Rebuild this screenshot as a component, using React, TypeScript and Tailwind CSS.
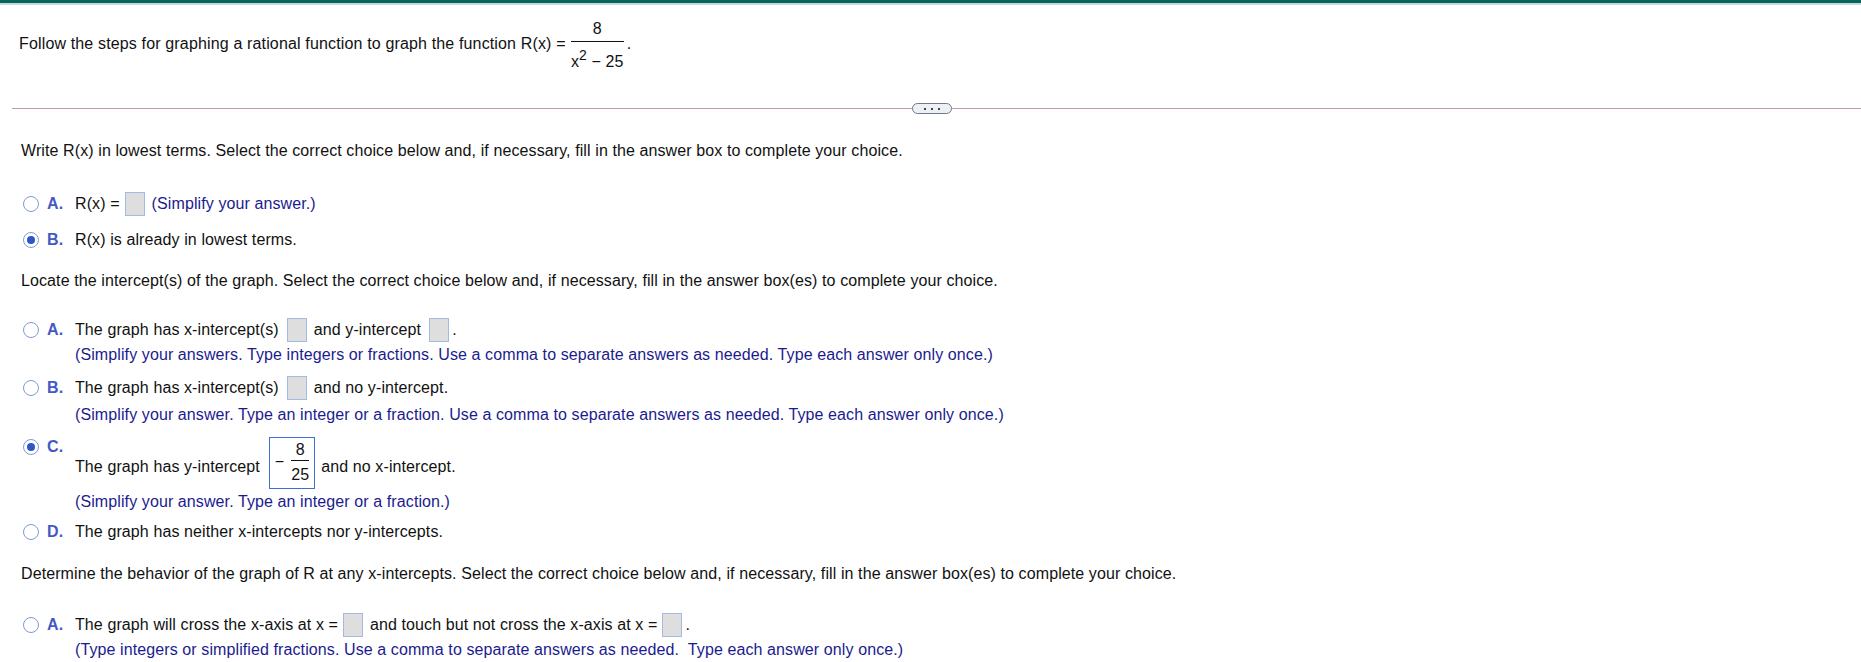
import React from "react";

function Radio({ checked }: { checked?: boolean }) {
  return (
    <span className="flex h-[16px] w-[16px] shrink-0 items-center justify-center rounded-full border-[1.5px] border-[#7f9bd1] bg-white">
      {checked && <span className="h-[8px] w-[8px] rounded-full bg-[#2f55c9]" />}
    </span>
  );
}

function Box({ tight }: { tight?: boolean }) {
  return (
    <span
      className={`${tight ? "ml-[5px]" : "ml-[8px]"} mr-[7px] inline-block h-[24px] w-[20px] shrink-0 border border-[#a3bae2] bg-[#dedede]`}
    />
  );
}

function Label({ l }: { l: string }) {
  return <span className="ml-[8px] w-[28px] shrink-0 font-bold text-[#4558c4]">{l}</span>;
}

function Hint({ children, className = "" }: { children: React.ReactNode; className?: string }) {
  return <div className={`pl-[75px] leading-[20px] text-[#1b1b8f] ${className}`}>{children}</div>;
}

export default function App() {
  return (
    <div className="flex min-h-[662px] w-full flex-col bg-white font-['Liberation_Sans',Arial,sans-serif] text-[16px] tracking-[0.1px] text-[#111]">
      <div className="h-[3px] bg-[#06665a]" />
      <div className="h-[2px] bg-[#c7d6e1]" />

      {/* Title */}
      <div className="mt-[10px] flex items-center pl-[19px]">
        <span className="leading-[20px] tracking-[0.15px]">
          Follow the steps for graphing a rational function to graph the function R(x) =
        </span>
        <span className="ml-[5px] flex flex-col items-center">
          <span className="h-[22px] pt-[3px] leading-[22px]">8</span>
          <span className="mt-[4px] h-px w-[53px] bg-[#111]" />
          <span className="pt-[10px] leading-[20px]">
            x<span className="relative -top-[7px] text-[14px]">2</span> − 25
          </span>
        </span>
        <span className="ml-[3px] leading-[20px]">.</span>
      </div>

      {/* Separator */}
      <div className="relative mt-[36px] ml-[12px] h-px bg-[#c697a8]">
        <span className="absolute left-[900px] top-[-5px] flex h-[11px] w-[40px] items-center justify-center gap-[5px] rounded-full border border-[#6e7a89] bg-[#eef1f4]">
          <span className="h-[2px] w-[2px] bg-[#444]" />
          <span className="h-[2px] w-[2px] bg-[#444]" />
          <span className="h-[2px] w-[2px] bg-[#444]" />
        </span>
      </div>

      {/* Section 1 */}
      <div className="mt-[32px] pl-[21px] leading-[20px]">
        Write R(x) in lowest terms. Select the correct choice below and, if necessary, fill in the answer box to complete your choice.
      </div>
      <div className="mt-[31px] flex h-[24px] items-center pl-[23px]">
        <Radio />
        <Label l="A." />
        <span>R(x) =</span>
        <Box tight />
        <span className="text-[#1b1b8f]">(Simplify your answer.)</span>
      </div>
      <div className="mt-[12px] flex h-[24px] items-center pl-[23px]">
        <Radio checked />
        <Label l="B." />
        <span>R(x) is already in lowest terms.</span>
      </div>

      {/* Section 2 */}
      <div className="mt-[19px] pl-[21px] leading-[20px]">
        Locate the intercept(s) of the graph. Select the correct choice below and, if necessary, fill in the answer box(es) to complete your choice.
      </div>
      <div className="mt-[27px] flex h-[24px] items-center pl-[23px]">
        <Radio />
        <Label l="A." />
        <span>The graph has x-intercept(s)</span>
        <Box />
        <span>and y-intercept</span>
        <Box />
        <span className="-ml-[4px]">.</span>
      </div>
      <Hint className="mt-[3px]">
        (Simplify your answers. Type integers or fractions. Use a comma to separate answers as needed. Type each answer only once.)
      </Hint>
      <div className="mt-[11px] flex h-[24px] items-center pl-[23px]">
        <Radio />
        <Label l="B." />
        <span>The graph has x-intercept(s)</span>
        <Box />
        <span>and no y-intercept.</span>
      </div>
      <Hint className="mt-[5px]">
        (Simplify your answer. Type an integer or a fraction. Use a comma to separate answers as needed. Type each answer only once.)
      </Hint>
      <div className="mt-[12px] flex items-start pl-[23px]">
        <span className="flex h-[20px] items-center">
          <Radio checked />
        </span>
        <span className="ml-[8px] w-[28px] shrink-0 font-bold leading-[20px] text-[#4558c4]">C.</span>
        <div className="flex h-[52px] items-center">
          <span className="pt-[8px] leading-[20px]">The graph has y-intercept</span>
          <span className="ml-[9px] mr-[6px] flex h-[52px] items-center border border-[#3d6fd2] bg-white px-[5px] pb-[2px]">
            <span className="leading-[20px]">−</span>
            <span className="ml-[7px] flex flex-col items-center">
              <span className="h-[20px] leading-[20px]">8</span>
              <span className="h-px w-[18px] bg-[#111]" />
              <span className="mt-[4px] h-[20px] leading-[20px]">25</span>
            </span>
          </span>
          <span className="pt-[8px] leading-[20px]">and no x-intercept.</span>
        </div>
      </div>
      <Hint className="mt-[3px]">(Simplify your answer. Type an integer or a fraction.)</Hint>
      <div className="mt-[8px] flex h-[24px] items-center pl-[23px]">
        <Radio />
        <Label l="D." />
        <span>The graph has neither x-intercepts nor y-intercepts.</span>
      </div>

      {/* Section 3 */}
      <div className="mt-[20px] pl-[21px] leading-[20px]">
        Determine the behavior of the graph of R at any x-intercepts. Select the correct choice below and, if necessary, fill in the answer box(es) to complete your choice.
      </div>
      <div className="mt-[29px] flex h-[24px] items-center pl-[23px]">
        <Radio />
        <Label l="A." />
        <span>The graph will cross the x-axis at x =</span>
        <Box tight />
        <span>and touch but not cross the x-axis at x =</span>
        <Box tight />
        <span className="-ml-[4px]">.</span>
      </div>
      <Hint className="mt-[3px]">
        (Type integers or simplified fractions. Use a comma to separate answers as needed.&nbsp; Type each answer only once.)
      </Hint>
    </div>
  );
}
